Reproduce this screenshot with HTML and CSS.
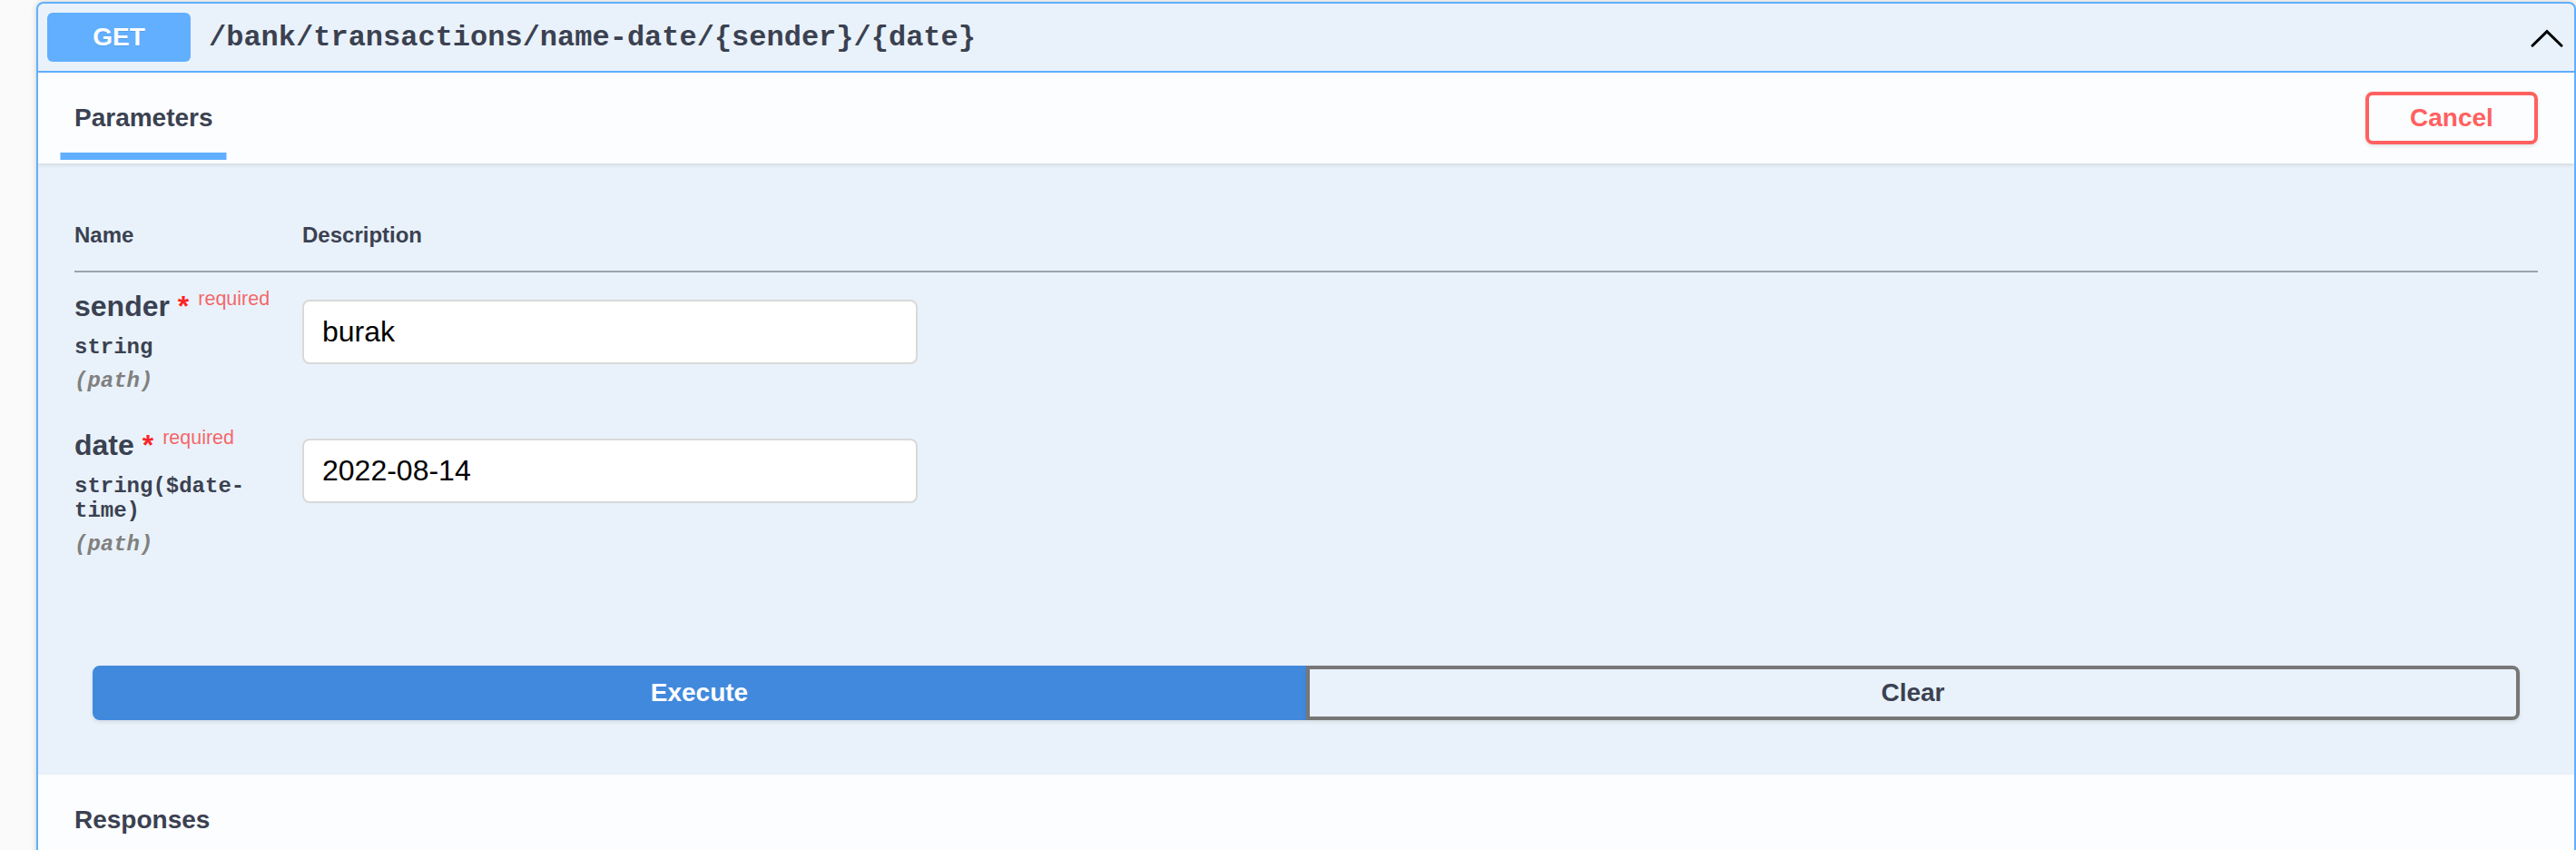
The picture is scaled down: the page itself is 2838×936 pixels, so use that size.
FILE: index.html
```html
<!DOCTYPE html>
<html lang="en">
<head>
<meta charset="utf-8">
<title>GET /bank/transactions/name-date/{sender}/{date}</title>
<link rel="stylesheet" href="styles.css">
</head>
<body>
<div class="page">
  <div class="opblock">
    <div class="summary">
      <span class="method">GET</span>
      <span class="path">/bank/transactions/name-date/{sender}/{date}</span>
      <svg class="arrow" viewBox="0 0 20 20" width="40" height="40" aria-hidden="true">
        <polyline points="2,14.6 10,6.8 18,14.6" fill="none" stroke="#000" stroke-width="1.5" stroke-linecap="round" stroke-linejoin="miter"/>
      </svg>
    </div>

    <div class="section-header">
      <div class="tab"><h4><span class="tab-label">Parameters</span></h4></div>
      <button class="btn cancel">Cancel</button>
    </div>

    <div class="table-container">
      <div class="params">
        <div class="col-head">Name</div>
        <div class="col-head">Description</div>

        <div class="cell name-cell">
          <div class="param-name">sender<span class="star">&nbsp;*</span><span class="req">required</span></div>
          <div class="param-type">string</div>
          <div class="param-in">(path)</div>
        </div>
        <div class="cell desc-cell">
          <input class="text-input" type="text" value="burak">
        </div>

        <div class="cell name-cell">
          <div class="param-name">date<span class="star">&nbsp;*</span><span class="req">required</span></div>
          <div class="param-type">string($date-time)</div>
          <div class="param-in">(path)</div>
        </div>
        <div class="cell desc-cell">
          <input class="text-input" type="text" value="2022-08-14">
        </div>
      </div>
    </div>

    <div class="btn-group">
      <button class="btn execute">Execute</button>
      <button class="btn clear">Clear</button>
    </div>

    <div class="section-header responses">
      <h4>Responses</h4>
    </div>
  </div>
</div>
</body>
</html>
```

FILE: styles.css
```css
* { box-sizing: border-box; }

html, body {
  margin: 0;
  padding: 0;
  background: #fafafa;
  font-family: "Liberation Sans", Arial, Helvetica, sans-serif;
  color: #3b4151;
  overflow: hidden;
}

.page {
  padding: 2px 0 0 40px;
  height: 936px;
}

.opblock {
  border: 2px solid #61affe;
  border-radius: 8px;
  background: #e9f2fa;
  box-shadow: 0 0 6px rgba(0, 0, 0, 0.19);
  overflow: hidden;
}

.summary {
  display: flex;
  align-items: center;
  padding: 10px;
  border-bottom: 2px solid #61affe;
}

.method {
  display: inline-flex;
  align-items: center;
  justify-content: center;
  min-width: 158px;
  height: 54px;
  background: #61affe;
  border-radius: 6px;
  color: #fff;
  font-size: 28px;
  font-weight: 700;
  text-shadow: 0 1px 0 rgba(0, 0, 0, 0.1);
}

.path {
  flex: 1;
  padding: 0 20px;
  font-family: "Liberation Mono", "Courier New", monospace;
  font-weight: 700;
  font-size: 32px;
  color: #3b4151;
}

.arrow {
  display: block;
  flex: none;
}

.section-header {
  display: flex;
  align-items: center;
  justify-content: space-between;
  min-height: 100px;
  padding: 16px 40px;
  background: rgba(255, 255, 255, 0.8);
  box-shadow: 0 2px 4px rgba(0, 0, 0, 0.1);
}

.section-header h4 {
  margin: 0;
  font-size: 28px;
  font-weight: 700;
  line-height: 32px;
  color: #3b4151;
}

.tab-label {
  position: relative;
  display: inline-block;
}

.tab-label::after {
  content: "";
  position: absolute;
  left: 50%;
  bottom: -30px;
  width: 120%;
  height: 8px;
  transform: translateX(-50%);
  background: #61affe;
}

.btn {
  font-family: "Liberation Sans", Arial, Helvetica, sans-serif;
  font-size: 28px;
  font-weight: 700;
  cursor: pointer;
  background: transparent;
}

.cancel {
  width: 190px;
  height: 58px;
  border: 4px solid #ff6060;
  border-radius: 8px;
  color: #ff6060;
  box-shadow: 0 2px 4px rgba(0, 0, 0, 0.1);
}

.table-container {
  padding: 40px;
}

.params {
  display: grid;
  grid-template-columns: 251px 1fr;
}

.col-head {
  padding: 24px 0;
  font-size: 24px;
  line-height: 30px;
  font-weight: 700;
  color: #3b4151;
  border-bottom: 2px solid rgba(59, 65, 81, 0.45);
}

.cell {
  padding: 20px 0;
}

.param-name {
  font-size: 32px;
  font-weight: 700;
  line-height: 35px;
  color: #3b4151;
  white-space: nowrap;
}

.star {
  color: #ff0000;
  opacity: 0.85;
}

.req {
  position: relative;
  top: -12px;
  padding: 10px;
  font-size: 21.5px;
  font-weight: 400;
  color: rgba(255, 0, 0, 0.6);
}

.param-type {
  padding: 10px 0;
  font-family: "Liberation Mono", "Courier New", monospace;
  font-size: 24px;
  line-height: 27px;
  font-weight: 700;
  color: #3b4151;
}

.param-in {
  font-family: "Liberation Mono", "Courier New", monospace;
  font-size: 24px;
  line-height: 27px;
  font-weight: 700;
  font-style: italic;
  color: #808080;
}

.text-input {
  display: block;
  width: 678px;
  height: 71px;
  margin: 10px 0;
  padding: 0 20px;
  border: 2px solid #d9d9d9;
  border-radius: 8px;
  background: #fff;
  font-family: "Liberation Sans", Arial, Helvetica, sans-serif;
  font-size: 32px;
  color: #000;
  outline: none;
}

.btn-group {
  display: flex;
  padding: 60px;
}

.btn-group .btn {
  flex: 1 1 50%;
  height: 60px;
}

.execute {
  background: #4189dd;
  border: 4px solid #4189dd;
  border-radius: 8px 0 0 8px;
  color: #fff;
  box-shadow: 0 2px 4px rgba(0, 0, 0, 0.1);
}

.clear {
  border: 4px solid #777;
  border-radius: 0 8px 8px 0;
  color: #3b4151;
  box-shadow: 0 2px 4px rgba(0, 0, 0, 0.1);
}

.responses {
  box-shadow: none;
}
```
